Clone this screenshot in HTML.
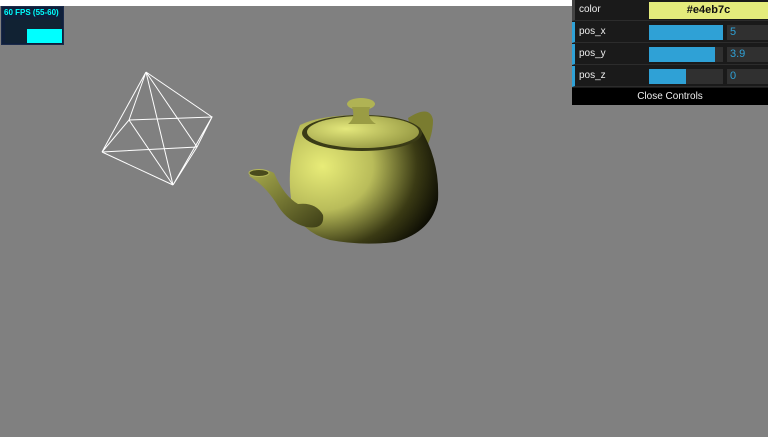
<!DOCTYPE html>
<html><head><style>
body{margin:0;width:768px;height:437px;background:#808080;overflow:hidden;position:relative;font-family:"Liberation Sans",sans-serif}
#top{position:absolute;left:0;top:0;width:572px;height:6px;background:#fff}
#fps{position:absolute;left:1px;top:6px;width:63px;height:39px;background:#0f1f3a;border:1px solid #1a2a4a;box-sizing:border-box}
#fps span{position:absolute;left:2px;top:1px;font-size:8px;font-weight:bold;color:#0ff}
#fps .g{position:absolute;left:3px;top:12px;width:56px;height:24px;background:#123}
#fps .b{position:absolute;left:25px;top:22px;width:35px;height:14px;background:#0ff}
#gui{position:absolute;left:572px;top:0;width:196px;height:105px;background:#1a1a1a;font-size:10px;color:#eee}
.row{position:absolute;left:0;width:196px;height:21px;border-bottom:1px solid #2c2c2c;box-sizing:border-box;border-left:3px solid #2fa1d6;background:#1a1a1a}
.row .l{position:absolute;left:4px;top:4px}
.sl{position:absolute;left:74px;top:3px;width:74px;height:15px;background:#303030}
.sl div{height:100%;background:#2fa1d6}
.v{position:absolute;left:152px;top:3px;width:41px;height:15px;background:#303030;color:#2fa1d6;font-size:11px;line-height:15px;padding-left:3px;box-sizing:border-box}
#close{position:absolute;left:0;top:88px;width:196px;height:17px;background:#000;text-align:center;font-size:10px;line-height:17px}
</style></head><body>
<div id="top"></div>
<div id="fps"><span>60 FPS (55-60)</span><div class="g"></div><div class="b"></div></div>
<svg width="768" height="437" style="position:absolute;left:0;top:0">
<defs>
<radialGradient id="bg" cx="0.22" cy="0.4" r="0.85">
<stop offset="0" stop-color="#e8ec78"/><stop offset="0.4" stop-color="#b9bc5a"/><stop offset="0.75" stop-color="#3a3a14"/><stop offset="1" stop-color="#080802"/></radialGradient>
<radialGradient id="lg" cx="0.35" cy="0.4" r="0.8"><stop offset="0" stop-color="#e4e87c"/><stop offset="1" stop-color="#8a8c3a"/></radialGradient>
<linearGradient id="sg" x1="0" y1="0" x2="1" y2="1"><stop offset="0" stop-color="#a9ac4e"/><stop offset="1" stop-color="#3c3d16"/></linearGradient>
</defs>
<g stroke="#fff" stroke-width="1" fill="none">
<path d="M146 72L212 117M146 72L173 185M146 72L102 152M146 72L129 120M146 72L197 147M173 185L212 117M173 185L102 152M173 185L129 120M173 185L197 147M102 152L129 120L212 117L197 147L102 152"/>
</g>
<path d="M408 118 Q430 104 433 120 Q433 140 420 158 L415 140 Q424 126 410 126Z" fill="#7a7c30"/>
<path d="M300 125 Q320 115 362 115 Q405 115 420 128 Q440 160 438 200 Q432 232 395 242 Q362 246 330 240 Q300 232 292 205 Q285 165 300 125Z" fill="url(#bg)"/>
<path d="M249 176 Q262 166 274 173 Q284 196 298 204 Q316 202 323 215 Q325 230 306 227 Q288 222 278 206 Q266 186 249 176Z" fill="url(#sg)"/>
<ellipse cx="259" cy="173" rx="10" ry="3.5" fill="#4a4b1c" stroke="#b5b85a" stroke-width="1"/>
<ellipse cx="362" cy="133" rx="60" ry="18" fill="#3a3b16"/>
<ellipse cx="363" cy="132" rx="56" ry="16" fill="url(#lg)"/>
<ellipse cx="361" cy="104" rx="14" ry="6" fill="#b0b354"/>
<path d="M352 107 Q356 118 348 124 L376 124 Q366 118 370 107Z" fill="#9a9c44"/>
</svg>
<div id="gui">
<div class="row" style="top:0;border-left-color:#444"><span class="l">color</span><div style="position:absolute;left:74px;top:2px;width:119px;height:17px;background:#e4eb7c;color:#111;font-weight:bold;font-size:11px;text-align:center;line-height:17px">#e4eb7c</div></div>
<div class="row" style="top:22px"><span class="l">pos_x</span><div class="sl"><div style="width:100%"></div></div><div class="v">5</div></div>
<div class="row" style="top:44px"><span class="l">pos_y</span><div class="sl"><div style="width:89%"></div></div><div class="v">3.9</div></div>
<div class="row" style="top:66px"><span class="l">pos_z</span><div class="sl"><div style="width:50%"></div></div><div class="v">0</div></div>
<div id="close">Close Controls</div>
</div>
</body></html>
